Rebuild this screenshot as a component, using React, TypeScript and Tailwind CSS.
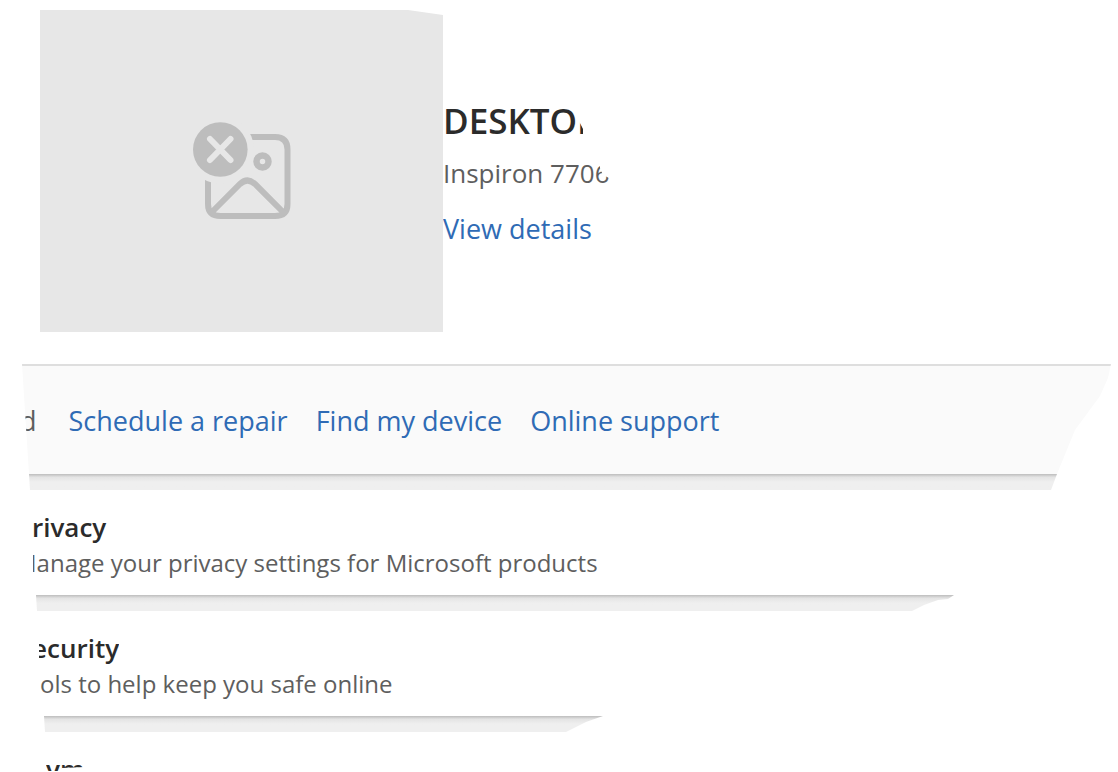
const services = [
  {
    title: "rivacy",
    text: "Manage your privacy settings for Microsoft products",
    titleClass: "pl-8",
    textClass: "ml-[15px] [clip-path:inset(0_0_0_18px)]",
    strip: "[clip-path:polygon(36px_0,954px_0,948px_4px,938px_5px,924px_10px,912px_100%,37px_100%)]",
  },
  {
    title: "ecurity",
    text: "ols to help keep you safe online",
    titleClass: "ml-8 [clip-path:inset(0_0_0_7px)]",
    textClass: "pl-10",
    strip: "[clip-path:polygon(44px_0,603px_0,586px_6px,566px_100%,45px_100%)]",
  },
];

function MissingPicture() {
  return (
    <svg viewBox="0 0 98 98" className="h-[98px] w-[98px]" fill="none" aria-hidden="true">
      <path
        d="M56 15H82Q94.500 15 94.500 27.500V82Q94.500 94 82 94H27.500Q15 94 15 82V56"
        stroke="#bdbdbd"
        strokeWidth="6"
      />
      <path d="M17 92L47 62Q54.500 55 62 62L92 92" stroke="#bdbdbd" strokeWidth="6" />
      <circle cx="69.500" cy="39.500" r="6" stroke="#bdbdbd" strokeWidth="6.500" />
      <circle cx="27" cy="27.500" r="34" fill="#e7e7e7" />
      <circle cx="27.300" cy="27.500" r="27.300" fill="#bdbdbd" />
      <path d="M17 17L37.500 38M37.500 17L17 38" stroke="#e7e7e7" strokeWidth="6" strokeLinecap="round" />
    </svg>
  );
}

function Strip({ shape }: { shape: string }) {
  return (
    <div
      className={`h-4 bg-linear-to-b from-[#bdbdbd] from-0% via-[#e4e4e4] via-20% to-[#efefef] to-50% ${shape}`}
    />
  );
}

export default function App() {
  return (
    <main className="h-screen overflow-hidden bg-white font-['Open_Sans','Noto_Sans',sans-serif] text-[#5e5e5e]">
      <header className="flex h-[364px] items-start pt-[10px] pl-10">
        <div className="flex h-[322px] w-[403px] shrink-0 items-center justify-center bg-[#e7e7e7] [clip-path:polygon(0_0,368px_0,100%_5px,100%_100%,0_100%)]">
          <MissingPicture />
        </div>
        <div className="flex flex-col items-start pt-[85px]">
          <h1 className="text-[35px] leading-[52px] font-semibold text-[#2b2b2b] [clip-path:polygon(0_0,134px_0,134px_22px,140px_34px,140px_100%,0_100%)]">
            DESKTOP
          </h1>
          <p className="mt-[6px] text-[26px] leading-10 [clip-path:polygon(0_0,157px_0,157px_15px,160px_22px,168px_26px,168px_100%,0_100%)]">
            Inspiron 7706
          </p>
          <a href="#details" className="mt-4 text-[27px] leading-10 text-[#2f6bb5]">
            View details
          </a>
        </div>
      </header>
      <nav className="flex h-[110px] items-center border-t-2 border-[#dedede] bg-[#fafafa] pt-[2px] text-[27px] leading-10 text-[#2f6bb5] [clip-path:polygon(22px_0,calc(100%_-_7px)_0,calc(100%_-_10px)_14px,calc(100%_-_18px)_32px,calc(100%_-_43px)_66px,calc(100%_-_61px)_100%,29px_100%)]">
        <div className="flex gap-7 pl-5">
          <span className="pr-1 text-[#5e5e5e] [clip-path:inset(0_0_0_5px)]">d</span>
          <a href="#repair">Schedule a repair</a>
          <a href="#find">Find my device</a>
          <a href="#support">Online support</a>
        </div>
      </nav>
      <Strip shape="[clip-path:polygon(29px_0,calc(100%_-_61px)_0,calc(100%_-_67px)_100%,30px_100%)]" />
      {services.map((s) => (
        <section key={s.title}>
          <div className="flex h-[105px] flex-col items-start pt-[19px]">
            <h2 className={`text-[26px] leading-9 font-semibold text-[#2b2b2b] ${s.titleClass}`}>{s.title}</h2>
            <p className={`text-2xl leading-9 ${s.textClass}`}>{s.text}</p>
          </div>
          <Strip shape={s.strip} />
        </section>
      ))}
      <section className="flex pt-[19px] pl-[46px]">
        <h2 className="text-[26px] leading-9 font-semibold text-[#2b2b2b] [clip-path:polygon(0_0,100%_0,100%_16px,16px_17px,12px_20px,0_20px)]">
          ym
        </h2>
      </section>
    </main>
  );
}
